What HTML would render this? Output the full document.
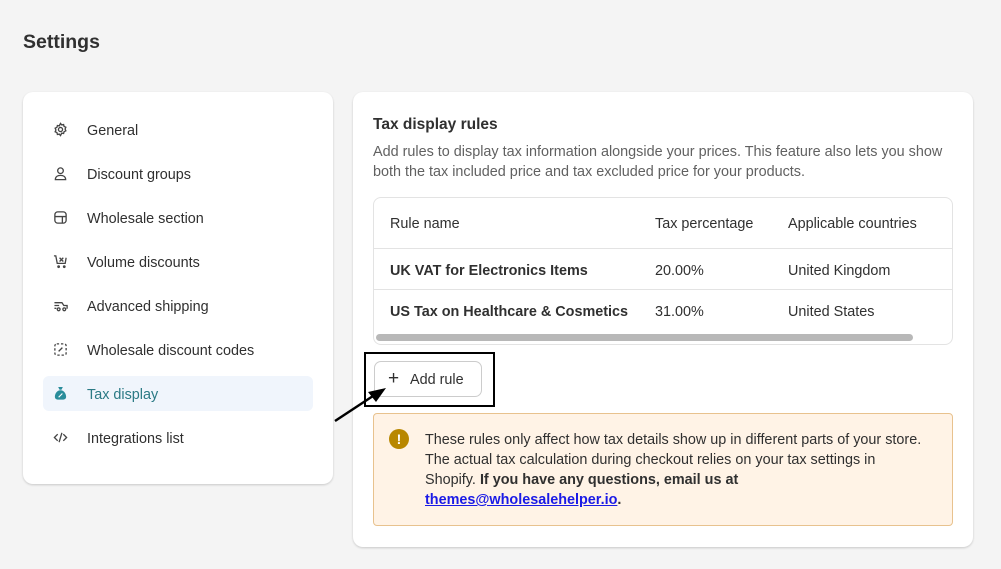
<!DOCTYPE html>
<html><head><meta charset="utf-8"><style>
*{box-sizing:border-box;margin:0;padding:0}
body{width:1001px;height:569px;background:#f4f4f4;font-family:"Liberation Sans",sans-serif;color:#303030;position:relative;overflow:hidden}
.abs{position:absolute}
h1{position:absolute;left:23px;top:31px;font-size:19.5px;font-weight:bold;color:#303030}
.card{position:absolute;background:#fff;border-radius:10px;box-shadow:0 1px 2px rgba(0,0,0,.18)}
.nav{position:absolute;left:43px;width:270px;height:35px;font-size:14.4px;line-height:38px;padding-left:44px;color:#303030}
.nav svg{position:absolute;left:10px;top:10px}
.nav.act{background:#f0f5fc;border-radius:6px;color:#2b7a85}
.t{position:absolute;font-size:14.4px;white-space:nowrap}
</style></head><body>
<h1>Settings</h1>
<div class="card" style="left:23px;top:92px;width:310px;height:392px"></div>
<div class="nav" style="top:112px"><svg width="15" height="15" viewBox="0 0 16 16" fill="none" stroke="#444" stroke-width="1.4"><circle cx="8" cy="8" r="2.2"/><path d="M8 1.5l1.3 1.6 2-.4.5 2 1.9.9-.8 1.9.8 1.9-1.9.9-.5 2-2-.4L8 14.5l-1.3-1.6-2 .4-.5-2-1.9-.9.8-1.9-.8-1.9 1.9-.9.5-2 2 .4z"/></svg>General</div>
<div class="nav" style="top:156px"><svg width="15" height="15" viewBox="0 0 16 16" fill="none" stroke="#444" stroke-width="1.4"><circle cx="8" cy="5" r="3"/><path d="M2.5 14.5c0-3 2.5-4.5 5.5-4.5s5.5 1.5 5.5 4.5z"/></svg>Discount groups</div>
<div class="nav" style="top:200px"><svg width="15" height="15" viewBox="0 0 16 16" fill="none" stroke="#444" stroke-width="1.4"><rect x="2" y="2" width="12" height="12" rx="3"/><path d="M2 7h12M10 7v7"/></svg>Wholesale section</div>
<div class="nav" style="top:244px"><svg width="15" height="15" viewBox="0 0 16 16" fill="none" stroke="#444" stroke-width="1.4"><path d="M1 2h2l1.5 8h8.5l1-6M7 4l4 4M7 8l4-4"/><circle cx="6" cy="13.5" r=".8"/><circle cx="12" cy="13.5" r=".8"/></svg>Volume discounts</div>
<div class="nav" style="top:288px"><svg width="16" height="15" viewBox="0 0 16 16" fill="none" stroke="#444" stroke-width="1.4"><path d="M1 5h8l2 3h3.5v3.5M1 8h5M1 11h2"/><circle cx="5.5" cy="12" r="1.5"/><circle cx="11.5" cy="12" r="1.5"/></svg>Advanced shipping</div>
<div class="nav" style="top:332px"><svg width="15" height="15" viewBox="0 0 16 16" fill="none" stroke="#444" stroke-width="1.4" stroke-dasharray="2.5 2"><rect x="2" y="2" width="12" height="12" rx="2"/><path d="M6 10l4-4" stroke-dasharray="none"/></svg>Wholesale discount codes</div>
<div class="nav act" style="top:376px"><svg width="15" height="15" viewBox="0 0 16 16"><path d="M5.5 1h5l-1.5 3h-2z M8 4.5c-4 0-6 4-6 7 0 2 1.5 3 3 3h6c1.5 0 3-1 3-3 0-3-2-7-6-7z" fill="#2a8d9b"/><path d="M6 12l4-4" stroke="#fff" stroke-width="1.2"/></svg>Tax display</div>
<div class="nav" style="top:420px"><svg width="15" height="15" viewBox="0 0 16 16" fill="none" stroke="#444" stroke-width="1.4"><path d="M5 4.5L1.5 8 5 11.5M11 4.5l3.5 3.5-3.5 3.5M9.5 3l-3 10"/></svg>Integrations list</div>

<div class="card" style="left:353px;top:92px;width:620px;height:455px"></div>
<div class="t" style="left:373px;top:116px;font-size:15.5px;font-weight:bold">Tax display rules</div>
<div class="t" style="left:373px;top:142px;color:#616161;line-height:20px">Add rules to display tax information alongside your prices. This feature also lets you show<br>both the tax included price and tax excluded price for your products.</div>
<div class="abs" style="left:373px;top:197px;width:580px;height:148px;border:1px solid #e3e3e3;border-radius:8px"></div>
<div class="abs" style="left:374px;top:248px;width:578px;height:1px;background:#e3e3e3"></div>
<div class="abs" style="left:374px;top:289px;width:578px;height:1px;background:#e3e3e3"></div>
<div class="abs" style="left:376px;top:334px;width:537px;height:7px;background:#b8b8b8;border-radius:4px"></div>
<div class="t" style="left:390px;top:216px">Rule name</div>
<div class="t" style="left:655px;top:216px">Tax percentage</div>
<div class="t" style="left:788px;top:216px">Applicable countries</div>
<div class="t" style="left:390px;top:263px;font-weight:bold">UK VAT for Electronics Items</div>
<div class="t" style="left:655px;top:263px">20.00%</div>
<div class="t" style="left:788px;top:263px">United Kingdom</div>
<div class="t" style="left:390px;top:304px;font-weight:bold">US Tax on Healthcare &amp; Cosmetics</div>
<div class="t" style="left:655px;top:304px">31.00%</div>
<div class="t" style="left:788px;top:304px">United States</div>

<div class="abs" style="left:374px;top:361px;width:108px;height:36px;border:1px solid #ccc;border-radius:7px;background:#fff"></div>
<div class="t" style="left:388px;top:369px;font-size:19px;line-height:19px">+</div>
<div class="t" style="left:410px;top:372px">Add rule</div>
<div class="abs" style="left:364px;top:352px;width:131px;height:55px;border:2px solid #000"></div>
<svg class="abs" style="left:330px;top:380px" width="60" height="45"><path d="M5 41L46 14" stroke="#000" stroke-width="2.5"/><path d="M56 8L38 12l8 10z" fill="#000"/></svg>

<div class="abs" style="left:373px;top:413px;width:580px;height:113px;background:#fff3e6;border:1px solid #e8c28e;border-radius:4px"></div>
<div class="abs" style="left:389px;top:429px;width:20px;height:20px;border-radius:50%;background:#b88700;color:#fff;font-weight:bold;font-size:14px;line-height:20px;text-align:center">!</div>
<div class="t" style="left:425px;top:430px;line-height:20px;color:#303030">These rules only affect how tax details show up in different parts of your store.<br>The actual tax calculation during checkout relies on your tax settings in<br>Shopify. <b>If you have any questions, email us at</b><br><b><a style="color:#1a1ae6;text-decoration:underline">themes@wholesalehelper.io</a>.</b></div>
</body></html>
